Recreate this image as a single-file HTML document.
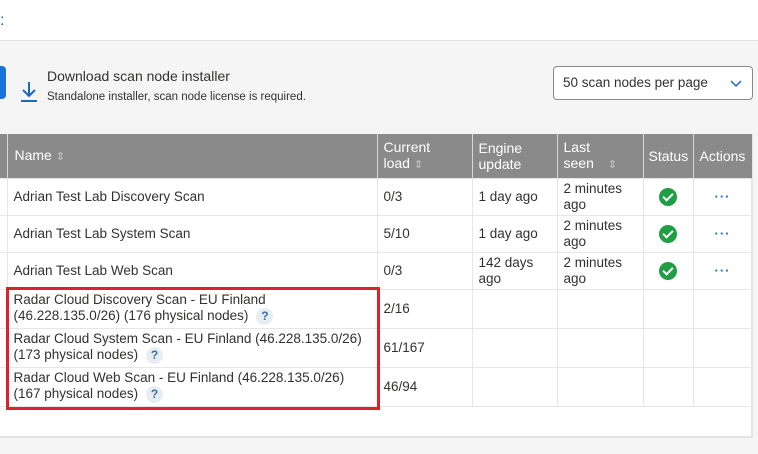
<!DOCTYPE html>
<html><head><style>
*{margin:0;padding:0;box-sizing:border-box}
body{width:758px;height:454px;overflow:hidden;background:#f5f5f5;font-family:"Segoe UI","Liberation Sans",sans-serif;color:#323130;position:relative}
.top{position:absolute;left:0;top:0;width:758px;height:41px;background:#fff;border-bottom:1px solid #e1e1e1}
.abs{position:absolute}
.panel{position:absolute;left:0;top:134px;width:753px;height:304px;background:#fff;border-right:2px solid #e4e4e4;border-bottom:2px solid #e4e4e4}
table{position:absolute;left:0;top:134px;border-collapse:collapse;font-size:13.5px;table-layout:fixed;width:752px}
th{background:#8a8a8a;color:#fff;font-weight:normal;text-align:left;padding:0 6px;height:44px;border-left:1px solid #d8d8d8;line-height:16px;vertical-align:middle;font-size:14px;white-space:nowrap}
td{border:1px solid #e6e6e6;padding:0 6px;line-height:16px;vertical-align:middle}
.s{color:#c8c8c8;font-size:11px}
.chk{display:inline-block;width:18px;height:18px;border-radius:50%;background:#1f9e44;position:relative;margin-top:4px}
.chk:after{content:"";position:absolute;left:6px;top:3px;width:4px;height:8px;border:solid #fff;border-width:0 2px 2px 0;transform:rotate(45deg)}
.dots{color:#1a67c4;font-weight:bold;letter-spacing:1px;font-size:13px}
.q{display:inline-block;width:17px;height:17px;border-radius:50%;background:#e8edf2;color:#3b6fa8;font-size:12px;text-align:center;line-height:17px;font-weight:bold;margin-left:8px}
</style></head><body>
<div class="top"><div class="abs" style="left:0;top:12px;color:#1a67c4;font-size:16px">:</div></div>
<div class="abs" style="left:0;top:66px;width:6px;height:33px;background:#1a73d9;border-radius:0 4px 4px 0"></div>
<svg class="abs" style="left:19px;top:80px" width="20" height="24" viewBox="0 0 20 24"><path d="M10 2V16M4 10L10 16L16 10" stroke="#1a67c4" stroke-width="2" fill="none"/><path d="M2 21H18" stroke="#1a67c4" stroke-width="2"/></svg>
<div class="abs" style="left:47px;top:68px;font-size:14px">Download scan node installer</div>
<div class="abs" style="left:47px;top:91px;font-size:11.5px">Standalone installer, scan node license is required.</div>
<div class="abs" style="left:553px;top:66px;width:200px;height:34px;background:#fff;border:1px solid #8a8a8a;border-radius:4px;font-size:13.5px;padding:8px 9px">50 scan nodes per page
<svg class="abs" style="right:10px;top:13px" width="12" height="8" viewBox="0 0 12 8"><path d="M1 1L6 6L11 1" stroke="#1a67c4" stroke-width="1.5" fill="none"/></svg></div>
<div class="panel"></div>
<table>
<colgroup><col style="width:7px"><col style="width:370px"><col style="width:95px"><col style="width:85px"><col style="width:86px"><col style="width:50px"><col style="width:59px"></colgroup>
<tr><th style="padding:0;border-left:none"></th><th style="padding-left:7px">Name <span class="s">&#8661;</span></th><th>Current<br>load <span class="s">&#8661;</span></th><th>Engine<br>update</th><th>Last<br>seen <span class="s" style="margin-left:10px">&#8661;</span></th><th style="padding:0 5px">Status</th><th style="padding:0 6px">Actions</th></tr>
<tr style="height:37px"><td style="padding:0;border-left:none"></td><td>Adrian Test Lab Discovery Scan</td><td>0/3</td><td>1 day ago</td><td>2 minutes<br>ago</td><td style="text-align:center"><span class="chk"></span></td><td style="text-align:center"><span class="dots">···</span></td></tr>
<tr style="height:37px"><td style="padding:0;border-left:none"></td><td>Adrian Test Lab System Scan</td><td>5/10</td><td>1 day ago</td><td>2 minutes<br>ago</td><td style="text-align:center"><span class="chk"></span></td><td style="text-align:center"><span class="dots">···</span></td></tr>
<tr style="height:37px"><td style="padding:0;border-left:none"></td><td>Adrian Test Lab Web Scan</td><td>0/3</td><td>142 days<br>ago</td><td>2 minutes<br>ago</td><td style="text-align:center"><span class="chk"></span></td><td style="text-align:center"><span class="dots">···</span></td></tr>
<tr style="height:39px"><td style="padding:0;border-left:none"></td><td>Radar Cloud Discovery Scan - EU Finland<br>(46.228.135.0/26) (176 physical nodes)<span class="q">?</span></td><td>2/16</td><td></td><td></td><td></td><td></td></tr>
<tr style="height:39px"><td style="padding:0;border-left:none"></td><td>Radar Cloud System Scan - EU Finland (46.228.135.0/26)<br>(173 physical nodes)<span class="q">?</span></td><td>61/167</td><td></td><td></td><td></td><td></td></tr>
<tr style="height:39px"><td style="padding:0;border-left:none"></td><td>Radar Cloud Web Scan - EU Finland (46.228.135.0/26)<br>(167 physical nodes)<span class="q">?</span></td><td>46/94</td><td></td><td></td><td></td><td></td></tr>
</table>
<div class="abs" style="left:6px;top:287px;width:374px;height:123px;border:3px solid #d9232e"></div>
</body></html>
